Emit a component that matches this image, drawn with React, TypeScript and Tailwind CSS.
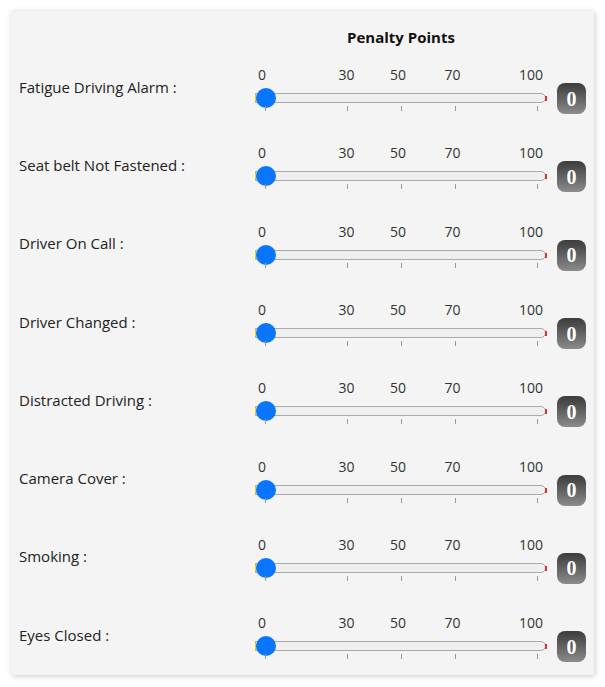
import React from 'react';

const rows = [
  'Fatigue Driving Alarm :',
  'Seat belt Not Fastened :',
  'Driver On Call :',
  'Driver Changed :',
  'Distracted Driving :',
  'Camera Cover :',
  'Smoking :',
  'Eyes Closed :',
];

const marks = [
  { value: 0, nudge: -3 },
  { value: 30, nudge: 0 },
  { value: 50, nudge: -3 },
  { value: 70, nudge: -3 },
  { value: 100, nudge: -6 },
];

const START = 10;
const SPAN = 272;
const pos = (v: number) => START + (v * SPAN) / 100;

function PenaltySlider() {
  return (
    <div className="flex flex-col w-[292px] shrink-0">
      <div className="relative h-[20px]">
        {marks.map((m) => (
          <span
            key={m.value}
            className="absolute top-0 -translate-x-1/2 text-[14px] leading-[20px] text-[#333]"
            style={{ left: pos(m.value) + m.nudge }}
          >
            {m.value}
          </span>
        ))}
      </div>
      <div className="relative mt-[8px] h-[10px] w-[291px] bg-[#efefef] border border-[#aaa] rounded-r-[5px]">
        <div className="absolute -left-px top-[1px] w-[2px] h-[6px] bg-[#e6d200]" />
        <div className="absolute -right-[2px] top-[2px] w-[2px] h-[5px] bg-[#e0302a]" />
        <div className="absolute left-0 -top-[6px] w-[20px] h-[20px] rounded-full bg-[#0a76ff]" />
      </div>
      <div className="relative mt-[3px] h-[5px]">
        {marks.map((m) => (
          <div key={m.value} className="absolute top-0 w-px h-[5px] bg-[#999]" style={{ left: pos(m.value) }} />
        ))}
      </div>
    </div>
  );
}

export default function App() {
  return (
    <div className="min-h-screen bg-white pt-[11px] pl-[11px] font-['Open_Sans',sans-serif]">
      <div className="w-[583px] h-[664px] bg-[#f4f4f4] shadow-[1px_1px_6px_rgba(0,0,0,0.2)] pt-[16px]">
        <div className="flex h-[20px] mb-[2px]">
          <div className="w-[244px]" />
          <div className="w-[292px] text-center text-[15px] leading-[20px] font-bold text-[#111]">Penalty Points</div>
        </div>
        {rows.map((label) => (
          <div key={label} className="flex items-center h-[78.3px] pl-[8px]">
            <div className="w-[236px] shrink-0 -mt-[3px] text-[15px] text-[#222] leading-[20px]">{label}</div>
            <PenaltySlider />
            <div className="ml-[10px] mt-[21px] w-[29px] h-[31px] rounded-[8px] bg-gradient-to-b from-[#3c3c3c] to-[#8c8c8c] flex items-center justify-center">
              <span className="text-white font-bold text-[20px] leading-none font-['Liberation_Serif',serif]">0</span>
            </div>
          </div>
        ))}
      </div>
    </div>
  );
}
